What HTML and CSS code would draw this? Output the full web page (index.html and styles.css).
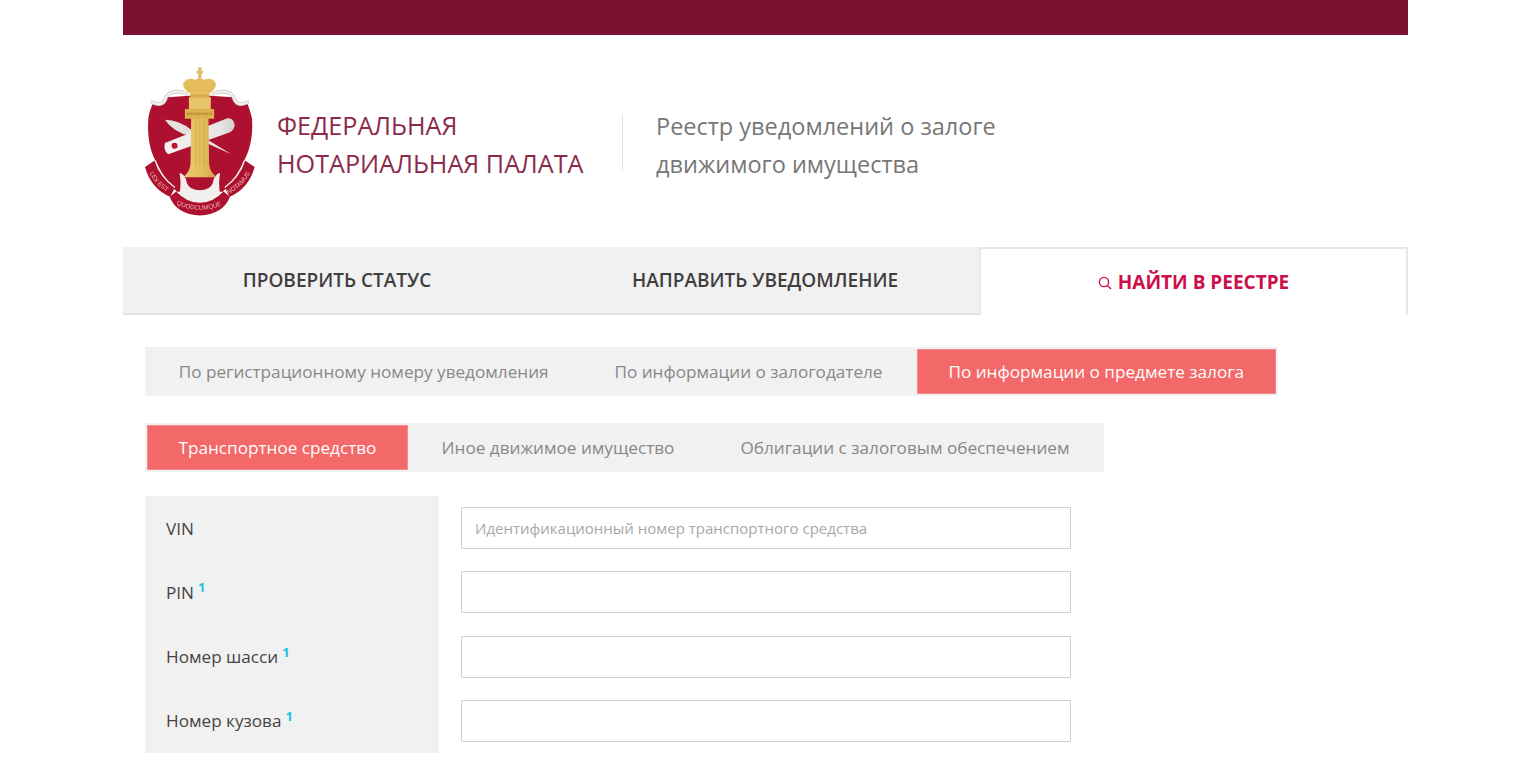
FILE: index.html
```html
<!DOCTYPE html>
<html lang="ru">
<head>
<meta charset="utf-8">
<title>Реестр уведомлений о залоге движимого имущества</title>
<link rel="stylesheet" href="styles.css">
</head>
<body>
<div class="page">
  <div class="topbar"></div>
  <header class="header">
    <svg class="logo" viewBox="60 50 340 450" aria-hidden="true">
      <defs>
        <path id="arcL" d="M80 368 Q98 410 146 432"/>
        <path id="arcM" d="M160 462 Q231 496 304 462"/>
        <path id="arcR" d="M316 432 Q362 410 384 364"/>
        <linearGradient id="column" x1="0" x2="1" y1="0" y2="0">
          <stop offset="0" stop-color="#e9c873"/>
          <stop offset="0.55" stop-color="#e6bf5e"/>
          <stop offset="1" stop-color="#cfa544"/>
        </linearGradient>
        <linearGradient id="scroll" x1="0" x2="1" y1="0" y2="0">
          <stop offset="0" stop-color="#f4f3f2"/>
          <stop offset="0.8" stop-color="#e6e5e4"/>
          <stop offset="1" stop-color="#cfcecd"/>
        </linearGradient>
      </defs>
      <path d="M76 205 C80 180 86 168 92 155 C110 165 125 150 135 140 L200 136 L262 136 L330 140 C340 150 355 165 372 155 C378 170 384 185 388 205 C392 260 380 305 362 335 Q340 385 300 425 L162 425 Q122 385 100 335 C82 305 72 260 76 205Z" fill="#ae1030"/>
      <path d="M88 156 Q122 172 130 138 Q152 114 190 130" fill="none" stroke="#c9c7c5" stroke-width="11" stroke-linecap="round"/>
      <path d="M374 156 Q340 172 332 138 Q310 114 272 130" fill="none" stroke="#c9c7c5" stroke-width="11" stroke-linecap="round"/>
      <path d="M88 156 Q122 172 130 138 Q152 114 190 130" fill="none" stroke="#f2f1f0" stroke-width="7" stroke-linecap="round"/>
      <path d="M374 156 Q340 172 332 138 Q310 114 272 130" fill="none" stroke="#f2f1f0" stroke-width="7" stroke-linecap="round"/>
      <path d="M170 368 Q188 372 192 398 Q200 420 231 420 Q262 420 270 398 Q274 372 292 368 Q286 400 292 430 Q262 458 231 458 Q200 458 170 430 Q176 400 170 368Z" fill="#f0efee"/>
      <path d="M66 350 L96 330 Q112 380 156 412 L142 440 Q84 415 66 350Z" fill="#ae1030"/>
      <path d="M396 350 L366 330 Q350 380 306 412 L320 440 Q378 415 396 350Z" fill="#ae1030"/>
      <path d="M96 330 Q112 380 156 412 M366 330 Q350 380 306 412" fill="none" stroke="#ecebea" stroke-width="4"/>
      <path d="M140 440 L160 424 Q192 458 231 458 Q270 458 302 424 L322 440 Q300 494 231 496 Q162 494 140 440Z" fill="#ae1030"/>
      <text class="motto"><textPath href="#arcL">LEX EST</textPath></text>
      <text class="motto"><textPath href="#arcM">QUODCUMQUE</textPath></text>
      <text class="motto"><textPath href="#arcR">NOTAMUS</textPath></text>
      <path d="M126 208 Q170 210 205 238 L326 312 L205 258 Q150 245 126 208Z" fill="#e4e2e0"/>
      <path d="M126 278 L312 204 Q332 200 336 224 Q334 240 322 246 L136 312 Q120 300 126 278Z" fill="url(#scroll)"/>
      <circle cx="155" cy="286" r="9" fill="#c8102e"/>
      <path d="M181 381 Q201 366 203 340 L205 200 H257 L259 340 Q261 366 281 381Z" fill="url(#column)"/>
      <path d="M198 178 V140 H264 V178Z" fill="#e8c468"/>
      <path d="M186 176 H274 V205 H186Z" fill="#dcb24e"/>
      <path d="M192 190 H268" stroke="#b98f35" stroke-width="7" stroke-dasharray="4 2" fill="none"/>
      <path d="M219 206 V345 M231 206 V345 M243 206 V345" stroke="#d0a443" stroke-width="2.5" fill="none"/>
      <path d="M203 130 Q178 114 181 98 Q194 78 218 88 L230 82 L244 88 Q268 78 279 98 Q282 114 259 130Z" fill="#e5bd5c"/>
      <path d="M202 130 H260 V141 H202Z" fill="#d9ae4b"/>
      <path d="M226 50 H236 V61 H241 V69 H236 V84 H226 V69 H221 V61 H226Z" fill="#dcbb6c"/>
    </svg>
    <div class="org">ФЕДЕРАЛЬНАЯ<br>НОТАРИАЛЬНАЯ ПАЛАТА</div>
    <div class="divider"></div>
    <div class="registry">Реестр уведомлений о залоге<br>движимого имущества</div>
  </header>
  <nav class="tabs">
    <a class="tab">ПРОВЕРИТЬ СТАТУС</a>
    <a class="tab">НАПРАВИТЬ УВЕДОМЛЕНИЕ</a>
    <a class="tab tab-active">
      <svg class="search" viewBox="0 0 14 14" aria-hidden="true"><circle cx="6" cy="6" r="4.6"/><path d="M9.4 9.4 L13 13"/></svg>
      НАЙТИ В РЕЕСТРЕ
    </a>
  </nav>
  <main class="content">
    <div class="pills pills-first">
      <a class="pill p1">По регистрационному номеру уведомления</a>
      <a class="pill p2">По информации о залогодателе</a>
      <a class="pill p3 pill-active">По информации о предмете залога</a>
    </div>
    <div class="pills pills-second">
      <a class="pill q1 pill-active">Транспортное средство</a>
      <a class="pill q2">Иное движимое имущество</a>
      <a class="pill q3">Облигации с залоговым обеспечением</a>
    </div>
    <form class="form">
      <div class="row"><label class="label">VIN</label><div class="field"><input class="input" placeholder="Идентификационный номер транспортного средства"></div></div>
      <div class="row"><label class="label">PIN<sup class="note">1</sup></label><div class="field"><input class="input"></div></div>
      <div class="row"><label class="label">Номер шасси<sup class="note">1</sup></label><div class="field"><input class="input"></div></div>
      <div class="row"><label class="label">Номер кузова<sup class="note">1</sup></label><div class="field"><input class="input"></div></div>
    </form>
  </main>
</div>
</body>
</html>
```
FILE: styles.css
```css
* { box-sizing: border-box; }
html, body { margin: 0; padding: 0; height: 764px; overflow: hidden; background: #fff; }
body { font-family: "Open Sans", "Noto Sans", sans-serif; color: #444; }
.page { width: 1285px; margin-left: 123px; }
.topbar { height: 35px; background: #7a1230; }
.header { height: 212px; display: flex; align-items: flex-start; }
.logo { width: 113px; height: 150px; margin: 32px 21px 0 20px; flex: none; filter: blur(0.4px); }
.motto { font-family: "Liberation Sans", sans-serif; font-size: 19px; fill: #eeb9b0; }
.org { font-size: 25.2px; line-height: 38px; color: #8c2b49; margin-top: 71px; width: 345px; white-space: nowrap; }
.divider { width: 1px; height: 56px; background: #e2e2e2; margin-top: 80px; flex: none; }
.registry { font-size: 23.5px; line-height: 38px; color: #777; margin: 72px 0 0 33px; white-space: nowrap; }
.tabs { display: grid; grid-template-columns: 428px 428px 429px; height: 68px; }
.tab { display: flex; align-items: center; justify-content: center; gap: 6px; font-size: 19px; font-weight: 600; color: #3f3f3f; background: #f1f1f1; border-bottom: 2px solid #e4e4e4; }
.tab-active { background: #fff; color: #cc0e4a; font-weight: 700; border: 2px solid #e8e8e8; border-bottom: 0; padding-bottom: 1px; }
.search { width: 14px; height: 14px; fill: none; stroke: #cc0e4a; stroke-width: 1.4; margin-top: 2px; }
.content { padding: 32px 0 0 22px; }
.pills { display: flex; align-items: stretch; background: #f1f1f1; padding: 2px; height: 49px; }
.pills-first { width: 1133px; margin-bottom: 27px; }
.pills-second { width: 959px; margin-bottom: 24px; }
.pill { display: flex; align-items: center; justify-content: center; font-size: 17.15px; color: #888; white-space: nowrap; }
.pill-active { background: #f36868; color: #fff; border: 1px solid #f58a8a; }
.p1 { width: 437px; padding-right: 3px; }
.p2 { width: 334px; padding-right: 3px; }
.p3 { width: 360px; }
.q1 { width: 261px; }
.q2 { width: 300px; }
.q3 { width: 394px; }
.form { width: 926px; }
.row { display: grid; grid-template-columns: 294px 610px; column-gap: 22px; height: 64.25px; }
.label { background: #f1f1f1; padding-left: 21px; display: flex; align-items: center; font-size: 17.15px; color: #444; gap: 4px; white-space: nowrap; }
.note { font-size: 13px; font-weight: 700; color: #1fc3e6; line-height: 1; margin-top: -9px; }
.field { display: flex; align-items: center; }
.input { width: 100%; height: 42px; border: 1px solid #cfcfcf; border-radius: 1px; padding: 0 13px; font-family: inherit; font-size: 15px; background: #fff; outline: 0; }
.input::placeholder { color: #a8a8a8; opacity: 1; }
```
